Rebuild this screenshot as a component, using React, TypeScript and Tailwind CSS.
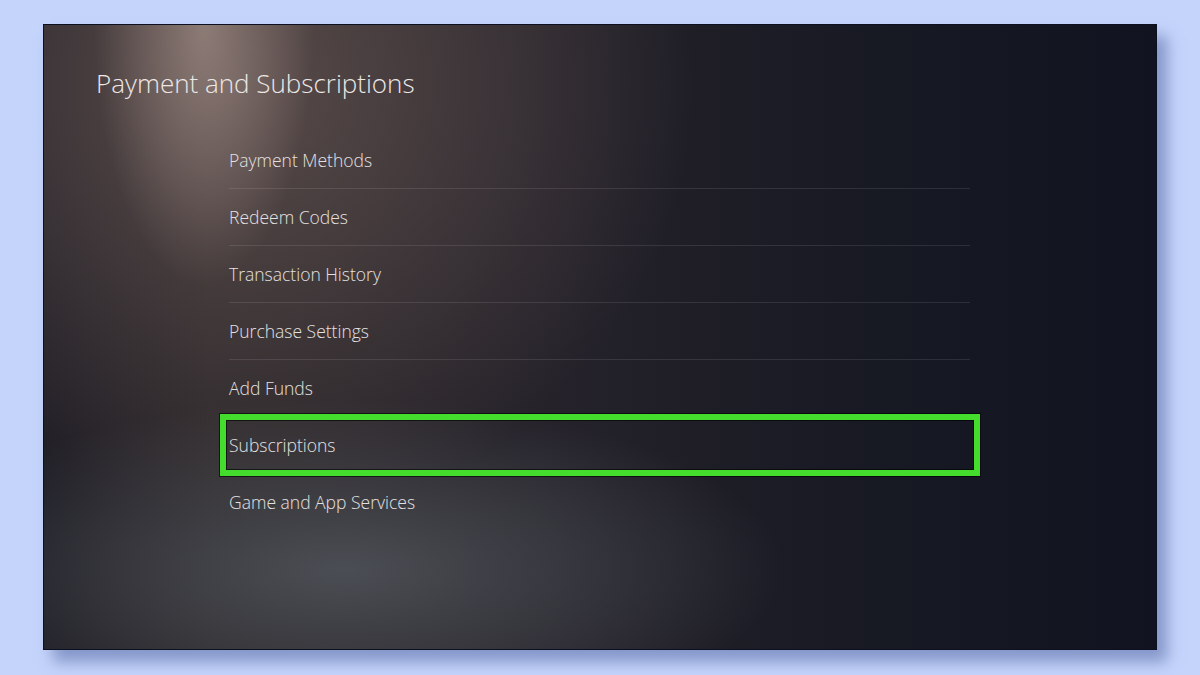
const ITEMS = [
  "Payment Methods",
  "Redeem Codes",
  "Transaction History",
  "Purchase Settings",
  "Add Funds",
  "Subscriptions",
  "Game and App Services",
];

const FOCUSED = "Subscriptions";

export default function App() {
  return (
    <div className="h-[675px] w-[1200px] overflow-hidden bg-[#c5d4fb] pl-[43px] pt-[24px]">
      <div
        className="relative h-[626px] w-[1114px] overflow-hidden border border-[#0d1020] bg-[radial-gradient(ellipse_110px_260px_at_160px_0px,rgba(165,145,138,0.7),transparent),radial-gradient(ellipse_460px_440px_at_190px_60px,rgba(110,92,88,0.7),transparent),radial-gradient(ellipse_440px_170px_at_300px_545px,rgba(78,82,88,0.9),transparent),linear-gradient(to_right,#1d1c24,#2a2629_15%,#25222a_45%,#171923_75%,#111420)] shadow-[10px_12px_14px_rgba(80,100,160,0.55)]"
        style={{ fontFamily: '"Open Sans", "Noto Sans", sans-serif' }}
      >
        <h1 className="pl-[52px] pt-[40px] text-[26px] font-light leading-[36px] text-[#ece8e6]">
          Payment and Subscriptions
        </h1>
        <ul className="ml-[185px] mt-[31px] w-[741px]">
          {ITEMS.map((item, i) => (
            <li
              key={item}
              className={`relative flex h-[57px] items-center text-[17.5px] font-light text-[#e4e1e1] ${
                i < 4 ? "border-b border-white/10" : ""
              }`}
            >
              {item}
              {item === FOCUSED && (
                <span className="absolute -left-[9px] -right-[10px] -top-[3px] -bottom-[2px] border-[6px] border-[#44dd2e] shadow-[0_0_0_1px_rgba(0,0,0,0.6),inset_0_0_0_1px_rgba(0,0,0,0.6)]" />
              )}
            </li>
          ))}
        </ul>
      </div>
    </div>
  );
}
